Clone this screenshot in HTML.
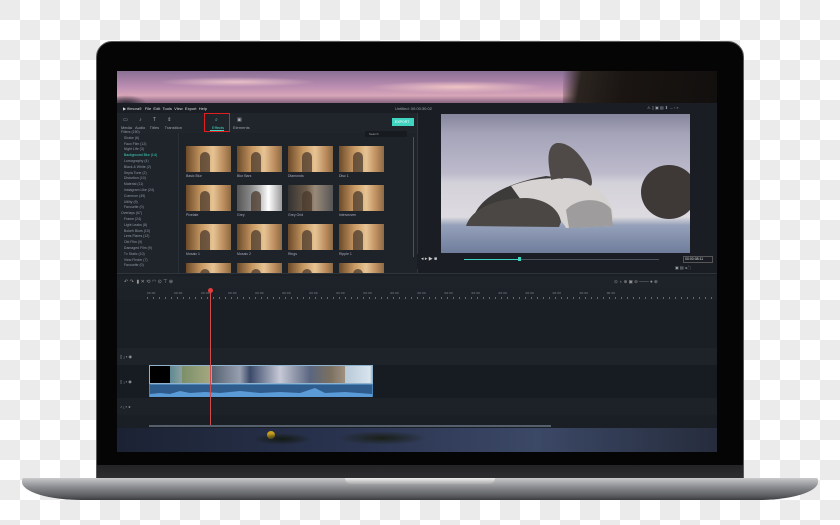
<!DOCTYPE html>
<html><head><meta charset="utf-8"><style>
*{margin:0;padding:0;box-sizing:border-box}
body{width:840px;height:525px;overflow:hidden;position:relative;font-family:"Liberation Sans",sans-serif;
background-color:#fff;background-image:linear-gradient(45deg,#ebebeb 25%,transparent 25%,transparent 75%,#ebebeb 75%),linear-gradient(45deg,#ebebeb 25%,transparent 25%,transparent 75%,#ebebeb 75%);background-size:40px 40px;background-position:20px 0,0 20px}
.abs{position:absolute}
.lid{left:96px;top:41px;width:648px;height:438px;background:#050505;border-radius:16px 16px 0 0;border:1px solid #5a5a5a}
.chin{left:97px;top:465px;width:646px;height:14px;background:linear-gradient(#232325,#2e2e30)}
.base{left:22px;top:478px;width:796px;height:22px;background:linear-gradient(#c9c9cb,#8d8e92 40%,#5d5e62 80%,#3c3d40);border-radius:2px 2px 60px 60px/2px 2px 18px 18px}
.notch{left:345px;top:478px;width:150px;height:6px;background:linear-gradient(#eee,#aaa);border-radius:0 0 6px 6px}
.screen{left:117px;top:71px;width:600px;height:381px;overflow:hidden;background:#1c2128}
.sky{left:0;top:0;width:600px;height:33px;background:linear-gradient(180deg,#8a6f95 0%,#b98cb0 45%,#d8a6b8 75%,#7a5a78 100%)}
.t{font-size:4px;color:#9aa3ad;white-space:nowrap}
.thumb{width:45px;height:26px;background:linear-gradient(90deg,#6b4a2a,#c99a63 35%,#e7c494 60%,#b9895a 85%,#8a6a45);overflow:hidden}
.thumb::after{content:"";position:absolute;left:14px;top:6px;width:10px;height:20px;background:#4a3a2c;border-radius:5px 5px 0 0;opacity:.75}
.lbl{font-size:3.5px;color:#aab}
</style></head><body>
<div class="abs lid"></div>
<div class="abs chin"></div>
<div class="abs base"></div>
<div class="abs notch"></div>
<div class="abs screen">
 <div class="abs sky"></div>
 <div class="abs" style="left:40px;top:6px;width:160px;height:10px;background:radial-gradient(ellipse,#e8c0c8,rgba(0,0,0,0) 70%)"></div>
 <div class="abs" style="left:250px;top:10px;width:180px;height:12px;background:radial-gradient(ellipse,#efc4c4,rgba(0,0,0,0) 70%)"></div>
 <div class="abs" style="left:446px;top:0;width:154px;height:33px;background:linear-gradient(100deg,rgba(0,0,0,0) 0%,#2b241f 12%,#1a1512 40%,#120f0e)"></div>
 <div class="abs" style="left:0;top:24px;width:30px;height:9px;background:radial-gradient(ellipse at 30% 100%,#2a2630,rgba(0,0,0,0) 70%)"></div>
 <!-- menu bar -->
 <div class="abs" style="left:0;top:32px;width:600px;height:10px;background:#1a1e24"></div>
 <div class="abs t" style="left:6px;top:35px;color:#ddd">▶ filmora9 &nbsp; File &nbsp;Edit &nbsp;Tools &nbsp;View &nbsp;Export &nbsp;Help</div>
 <div class="abs t" style="left:278px;top:35px">Untitled: 00:00:30:02</div>
 <div class="abs t" style="left:530px;top:34px">⚠ ▯ ▣ ▤ ⬍ &nbsp;– ▫ ×</div>
 <!-- left toolbar -->
 <div class="abs" style="left:0;top:42px;width:300px;height:20px;background:#20252c"></div>
 <div class="abs t" style="left:6px;top:46px;font-size:5px;color:#aab;word-spacing:10px">▭ ♪ T ⇕</div>
 <div class="abs t" style="left:98px;top:46px;font-size:5px;color:#3fd5c0">⌕</div>
 <div class="abs t" style="left:120px;top:46px;font-size:5px;color:#aab">▣</div>
 <div class="abs t" style="left:4px;top:54px">Media &nbsp; Audio &nbsp; &nbsp;Titles &nbsp; &nbsp; Transition</div>
 <div class="abs t" style="left:95px;top:54px;color:#3fd5c0">Effects</div>
 <div class="abs t" style="left:116px;top:54px">Elements</div>
 <div class="abs" style="left:87px;top:42px;width:26px;height:19px;border:1px solid #e02020"></div>
 <div class="abs" style="left:93px;top:59px;width:14px;height:1px;background:#3fd5c0"></div>
 <div class="abs" style="left:275px;top:47px;width:22px;height:8px;background:#3fd5c0"></div>
 <div class="abs t" style="left:278px;top:49px;color:#fff;font-size:3.5px">EXPORT</div>
 <!-- left category panel -->
 <div class="abs" style="left:0;top:62px;width:62px;height:140px;background:#1f242b;border-right:1px solid #2b3139"></div>
 <div class="abs t" style="left:4px;top:59px;line-height:5.8px;font-size:3.5px;color:#8f98a3">
 Filters (150)<br>&nbsp;&nbsp;&nbsp;Shake (6)<br>&nbsp;&nbsp;&nbsp;Faux Film (12)<br>&nbsp;&nbsp;&nbsp;Night Life (3)<br><span style="color:#3fd5c0">&nbsp;&nbsp;&nbsp;Background Blur (14)</span><br>&nbsp;&nbsp;&nbsp;Lomography (4)<br>&nbsp;&nbsp;&nbsp;Black &amp; White (2)<br>&nbsp;&nbsp;&nbsp;Sepia Tone (2)<br>&nbsp;&nbsp;&nbsp;Distortion (10)<br>&nbsp;&nbsp;&nbsp;Material (11)<br>&nbsp;&nbsp;&nbsp;Instagram Like (24)<br>&nbsp;&nbsp;&nbsp;Common (49)<br>&nbsp;&nbsp;&nbsp;Utility (9)<br>&nbsp;&nbsp;&nbsp;Favourite (0)<br>Overlays (67)<br>&nbsp;&nbsp;&nbsp;Frame (24)<br>&nbsp;&nbsp;&nbsp;Light Leaks (8)<br>&nbsp;&nbsp;&nbsp;Bokeh Blurs (10)<br>&nbsp;&nbsp;&nbsp;Lens Flares (12)<br>&nbsp;&nbsp;&nbsp;Old Film (9)<br>&nbsp;&nbsp;&nbsp;Damaged Film (9)<br>&nbsp;&nbsp;&nbsp;Tv Static (10)<br>&nbsp;&nbsp;&nbsp;View Finder (7)<br>&nbsp;&nbsp;&nbsp;Favourite (0)</div>
 <!-- grid area -->
 <div class="abs" style="left:63px;top:62px;width:237px;height:140px;background:#1e232a"></div>
 <div class="abs" style="left:248px;top:60px;width:42px;height:6px;background:#171b20"></div>
 <div class="abs t" style="left:252px;top:61px;font-size:3px">Search</div>
 <div class="abs" style="left:296px;top:66px;width:1px;height:120px;background:#4a525c"></div>
 <div class="abs" style="left:69px;top:75px;width:220px;height:130px">
  <div class="abs thumb" style="left:0;top:0"></div><div class="abs thumb" style="left:51px;top:0"></div><div class="abs thumb" style="left:102px;top:0"></div><div class="abs thumb" style="left:153px;top:0"></div>
  <div class="abs lbl" style="left:0;top:28px">Basic Blur</div><div class="abs lbl" style="left:51px;top:28px">Blur Bars</div><div class="abs lbl" style="left:102px;top:28px">Diamonds</div><div class="abs lbl" style="left:153px;top:28px">Disc 1</div>
  <div class="abs thumb" style="left:0;top:39px"></div><div class="abs thumb" style="left:51px;top:39px;background:linear-gradient(90deg,#555,#888 30%,#ccc 55%,#fff 70%,#999)"></div><div class="abs thumb" style="left:102px;top:39px;background:linear-gradient(90deg,#333,#6b5a48 40%,#9a8a7a 60%,#555)"></div><div class="abs thumb" style="left:153px;top:39px"></div>
  <div class="abs lbl" style="left:0;top:67px">Pixelate</div><div class="abs lbl" style="left:51px;top:67px">Grey</div><div class="abs lbl" style="left:102px;top:67px">Grey Grid</div><div class="abs lbl" style="left:153px;top:67px">Interwoven</div>
  <div class="abs thumb" style="left:0;top:78px"></div><div class="abs thumb" style="left:51px;top:78px"></div><div class="abs thumb" style="left:102px;top:78px"></div><div class="abs thumb" style="left:153px;top:78px"></div>
  <div class="abs lbl" style="left:0;top:106px">Mosaic 1</div><div class="abs lbl" style="left:51px;top:106px">Mosaic 2</div><div class="abs lbl" style="left:102px;top:106px">Rings</div><div class="abs lbl" style="left:153px;top:106px">Ripple 1</div>
  <div class="abs thumb" style="left:0;top:117px;height:10px"></div><div class="abs thumb" style="left:51px;top:117px;height:10px"></div><div class="abs thumb" style="left:102px;top:117px;height:10px"></div><div class="abs thumb" style="left:153px;top:117px;height:10px"></div>
 </div>
 <!-- preview panel -->
 <div class="abs" style="left:300px;top:42px;width:300px;height:160px;background:#1a1e24;border-left:1px solid #2e343c"></div>
 <svg class="abs" style="left:324px;top:43px" width="249" height="139" viewBox="0 0 249 139">
  <defs><linearGradient id="bg" x1="0" y1="0" x2="0" y2="1">
   <stop offset="0" stop-color="#85859c"/><stop offset="0.14" stop-color="#a4a3b8"/><stop offset="0.42" stop-color="#bcbacb"/><stop offset="0.5" stop-color="#d4d2d9"/><stop offset="0.74" stop-color="#dddbe0"/><stop offset="0.8" stop-color="#95a1ba"/><stop offset="1" stop-color="#6f7d9c"/></linearGradient></defs>
  <rect width="249" height="139" fill="url(#bg)"/>
  <ellipse cx="228" cy="78" rx="28" ry="27" fill="#3e3936"/>
  <path d="M33 102 C40 82 70 68 105 62 L122 64 L115 92 Z" fill="#3d3a3a"/>
  <path d="M70 72 C100 60 140 62 160 78 C172 88 175 105 170 112 L125 114 C118 100 100 90 80 86 Z" fill="#d6d3d2"/>
  <path d="M125 96 C135 84 160 82 170 95 L172 112 L128 114 Z" fill="#9e9c9c"/>
  <path d="M25 112 C30 95 55 84 85 84 C105 85 118 95 120 108 L118 113 Z" fill="#4a4744"/>
  <path d="M110 64 C106 46 106 31 116 29 C128 28 140 40 148 56 C152 66 152 74 148 71 C140 64 125 62 110 66 Z" fill="#4f4a47"/>
 </svg>
 <div class="abs" style="left:300px;top:183px;width:300px;height:15px;background:#1a1e24"></div>
 <div class="abs t" style="left:304px;top:185px;font-size:5px;color:#ccc">◂ ▸ ▶ ■</div>
 <div class="abs" style="left:347px;top:188px;width:195px;height:1px;background:#4a525c"></div>
 <div class="abs" style="left:347px;top:188px;width:55px;height:1px;background:#3fd5c0"></div>
 <div class="abs" style="left:401px;top:186px;width:3px;height:4px;background:#3fd5c0"></div>
 <div class="abs" style="left:566px;top:185px;width:30px;height:7px;border:1px solid #555"></div>
 <div class="abs t" style="left:568px;top:186px;font-size:3.5px;color:#ddd">00:00:08:11</div>
 <div class="abs t" style="left:558px;top:194px">▣ ▤ ◂ ⛶</div>
 <!-- timeline -->
 <div class="abs" style="left:0;top:202px;width:600px;height:154px;background:#1b2027;border-top:1px solid #2e343c"></div>
 <div class="abs" style="left:0;top:205px;width:600px;height:12px;background:#1e232a"></div>
 <div class="abs t" style="left:7px;top:208px;font-size:5px;color:#999">↶ ↷ &nbsp;▮ ✕ ⟲ ◠ ⊙ ⊤ ⊕</div>
 <div class="abs t" style="left:497px;top:208px;font-size:4.5px;color:#999">⊙ ♁ ⊕ ▣ ⊖ ─── ● ⊕</div>
 <div class="abs" style="left:0;top:217px;width:600px;height:12px;background:#1d2229"></div>
 <div class="abs t" style="left:30px;top:220px;font-size:3px;color:#889;letter-spacing:0.2px;word-spacing:17.5px">00:00 00:00 00:00 00:00 00:00 00:00 00:00 00:00 00:00 00:00 00:00 00:00 00:00 00:00 00:00 00:00 00:00 00:00</div>
 <div class="abs" style="left:30px;top:226px;width:570px;height:2px;background:repeating-linear-gradient(90deg,#667 0 1px,transparent 1px 6px)"></div>
 <div class="abs" style="left:0;top:229px;width:600px;height:48px;background:#1a1f26"></div>
 <div class="abs" style="left:0;top:277px;width:600px;height:17px;background:#1e232a"></div>
 <div class="abs" style="left:0;top:294px;width:600px;height:33px;background:#171c22"></div>
 <div class="abs" style="left:0;top:327px;width:600px;height:17px;background:#1d2229"></div>
 <div class="abs" style="left:0;top:344px;width:600px;height:10px;background:#1a1f26"></div>
 <div class="abs t" style="left:3px;top:283px;font-size:4px">▯ ₂ ▪ ◉</div>
 <div class="abs t" style="left:3px;top:308px;font-size:4px">▯ ₁ ▪ ◉</div>
 <div class="abs t" style="left:3px;top:333px;font-size:4px">♪ ₁ ▪ ◂</div>
 <!-- clip -->
 <div class="abs" style="left:32px;top:294px;width:224px;height:19px;background:linear-gradient(90deg,#000 0,#000 20px,#5f8a94 20px,#8aa0a0 32px,#7b8f6a 32px,#a7a980 62px,#556170 62px,#98a0b0 90px,#3b4a6a 100px,#c7c9d6 130px,#5a6680 160px,#7a7060 180px,#a09080 195px,#b7c8d8 195px,#d8e4ee 220px,#888 224px);border:1px solid #8fb3cf"></div>
 <div class="abs" style="left:32px;top:313px;width:224px;height:13px;background:#2e5c8c;border:1px solid #4d84b8"></div>
 <svg class="abs" style="left:33px;top:314px" width="222" height="12"><path d="M0 12 L0 9 L10 8 L20 9 L30 6 L40 8 L55 7 L70 8 L90 6 L110 8 L130 7 L150 8 L165 3 L175 8 L195 7 L222 9 L222 12 Z" fill="#5a9ad6"/></svg>
 <div class="abs" style="left:0;top:354px;width:600px;height:3px;background:#1a1f26"></div>
 <div class="abs" style="left:32px;top:354px;width:402px;height:2px;background:#56606c"></div>
 <!-- playhead -->
 <div class="abs" style="left:93px;top:218px;width:1px;height:136px;background:#d24a4a"></div>
 <div class="abs" style="left:91px;top:217px;width:5px;height:5px;background:#e23c3c;border-radius:50%"></div>
 <!-- bottom photo -->
 <div class="abs" style="left:0;top:357px;width:600px;height:24px;background:linear-gradient(90deg,#1b2233,#2a3450 40%,#3b4866 70%,#262c3c)"></div>
 <div class="abs" style="left:150px;top:360px;width:8px;height:8px;background:#c9a11e;border-radius:50%"></div>
 <div class="abs" style="left:135px;top:362px;width:60px;height:12px;background:radial-gradient(#141a14,rgba(0,0,0,0) 70%)"></div>
 <div class="abs" style="left:220px;top:360px;width:90px;height:14px;background:radial-gradient(#1a1f16,rgba(0,0,0,0) 70%)"></div>
</div>
</body></html>
